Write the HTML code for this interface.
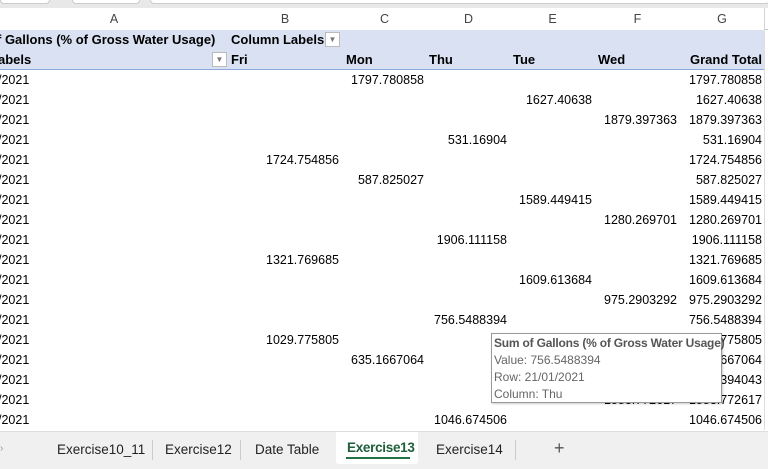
<!DOCTYPE html><html><head><style>
body{margin:0;width:768px;height:468px;overflow:hidden;background:#fff;font-family:"Liberation Sans",sans-serif;position:relative}
.a{position:absolute;white-space:nowrap}
.c{font-size:12.5px;color:#000;height:20px;line-height:20px}
.b{font-size:13px;font-weight:bold}
.r{text-align:right}
.h{position:absolute;top:8px;height:22px;line-height:22px;text-align:center;font-size:12.5px;color:#444;border-right:1px solid #d4d4d4;background:#fff}
.gl{position:absolute;top:70px;width:1px;height:360px;background:#ececec}
.tab{position:absolute;top:437px;font-size:13.5px;color:#222}
.sep{position:absolute;top:440px;width:1px;height:20px;background:#ccc}
</style></head><body>
<div class="a" style="left:0;top:0;width:768px;height:8px;background:#e8e8e8"></div>
<div class="a" style="left:0;top:0;width:48px;height:3px;background:#fff;border:1px solid #ccc;border-top:none;border-radius:0 0 6px 6px"></div>
<div class="a" style="left:72px;top:0;width:66px;height:3px;background:#fff;border:1px solid #ccc;border-top:none;border-radius:0 0 6px 6px"></div>
<div class="a" style="left:150px;top:0;width:618px;height:3px;background:#fff;border:1px solid #ccc;border-top:none;border-radius:0 0 6px 6px"></div>
<div class="a" style="left:0;top:8px;width:768px;height:22px;background:#fff;border-bottom:1px solid #c8c8c8;box-sizing:border-box"></div>
<div class="h" style="left:0;width:228px">A</div>
<div class="h" style="left:228px;width:114px">B</div>
<div class="h" style="left:342px;width:85px">C</div>
<div class="h" style="left:427px;width:83px">D</div>
<div class="h" style="left:510px;width:85px">E</div>
<div class="h" style="left:595px;width:85px">F</div>
<div class="h" style="left:680px;width:84px">G</div>
<div class="a" style="left:0;top:30px;width:764px;height:40px;background:#d9e1f2;border-bottom:1px solid #8ea9db;box-sizing:border-box"></div>
<div class="a" style="left:764px;top:30px;width:4px;height:400px;border-left:1px solid #ddd"></div>
<div class="a c b" style="left:-3px;top:30px">f Gallons (% of Gross Water Usage)</div>
<div class="a c b" style="left:231px;top:30px">Column Labels</div>
<div class="a" style="left:325px;top:32px;width:15px;height:15px;background:#fff;border:1px solid #bbb;box-sizing:border-box;font-size:8px;color:#777;text-align:center;line-height:14px">▼</div>
<div class="a c b" style="left:-2px;top:50px">abels</div>
<div class="a" style="left:212px;top:52px;width:15px;height:15px;background:#fff;border:1px solid #bbb;box-sizing:border-box;font-size:8px;color:#777;text-align:center;line-height:14px">▼</div>
<div class="a c b" style="left:231px;top:50px">Fri</div>
<div class="a c b" style="left:346px;top:50px">Mon</div>
<div class="a c b" style="left:429px;top:50px">Thu</div>
<div class="a c b" style="left:513px;top:50px">Tue</div>
<div class="a c b" style="left:598px;top:50px">Wed</div>
<div class="a c r b" style="left:680px;width:82px;top:50px">Grand Total</div>
<div id="rows"></div>
<script>
var R=[[342,'1797.780858'],[510,'1627.40638'],[595,'1879.397363'],[427,'531.16904'],[228,'1724.754856'],[342,'587.825027'],[510,'1589.449415'],[595,'1280.269701'],[427,'1906.111158'],[228,'1321.769685'],[510,'1609.613684'],[595,'975.2903292'],[427,'756.5488394'],[228,'1029.775805'],[342,'635.1667064'],[510,'1432.394043'],[595,'1583.772617'],[427,'1046.674506']];
var W={228:114,342:85,427:83,510:85,595:85};var h='';
R.forEach(function(x,i){var t=70+i*20;
h+='<div class="a c" style="left:-2px;top:'+t+'px">/2021</div>';
h+='<div class="a c r" style="left:'+x[0]+'px;width:'+(W[x[0]]-3)+'px;top:'+t+'px">'+x[1]+'</div>';
h+='<div class="a c r" style="left:680px;width:82px;top:'+t+'px">'+x[1]+'</div>';});
document.getElementById('rows').innerHTML=h;
</script>
<div class="a" style="left:491px;top:333px;width:231px;height:70px;background:#fff;border:1px solid #999;box-sizing:border-box;box-shadow:1px 1px 2px rgba(0,0,0,.2);font-size:12px;line-height:17px;padding:1px 2px;color:#666">
<div style="font-weight:bold;color:#555;letter-spacing:-0.2px">Sum of Gallons (% of Gross Water Usage)</div>
<div>Value: 756.5488394</div><div>Row: 21/01/2021</div><div>Column: Thu</div></div>
<div class="a" style="left:0;top:431px;width:768px;height:37px;background:#f0f0f0;border-top:1px solid #ddd"></div>
<div class="a" style="left:0;top:443px;font-size:10px;color:#999">›</div>
<div class="tab" style="left:57px;top:442px">Exercise10_11</div>
<div class="sep" style="left:152px"></div>
<div class="tab" style="left:165px;top:442px">Exercise12</div>
<div class="sep" style="left:240px"></div>
<div class="tab" style="left:255px;top:442px">Date Table</div>
<div class="a" style="left:336px;top:432px;width:82px;height:32px;background:#fff;border-radius:0 0 3px 3px"></div>
<div class="tab" style="left:347px;top:440px;font-weight:bold;color:#1e5e3b;letter-spacing:-0.3px">Exercise13</div>
<div class="a" style="left:346px;top:457px;width:64px;height:2px;background:#217346"></div>
<div class="tab" style="left:436px;top:442px">Exercise14</div>
<div class="sep" style="left:515px"></div>
<div class="tab" style="left:554px;top:438px;font-size:18px;color:#555">+</div>
</body></html>
